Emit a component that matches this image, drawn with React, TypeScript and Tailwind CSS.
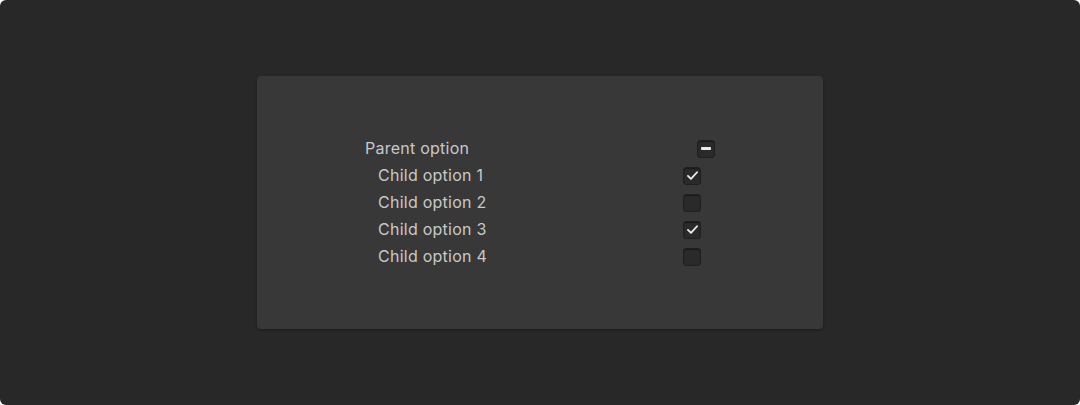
import { useState } from "react";

type Child = { label: string; checked: boolean };

const INITIAL: Child[] = [
  { label: "Child option 1", checked: true },
  { label: "Child option 2", checked: false },
  { label: "Child option 3", checked: true },
  { label: "Child option 4", checked: false },
];

export default function App() {
  const [items, setItems] = useState(INITIAL);

  const all = items.every((i) => i.checked);
  const some = items.some((i) => i.checked);

  function toggleParent() {
    setItems(items.map((i) => ({ ...i, checked: !all })));
  }

  function toggleChild(idx: number) {
    setItems(items.map((i, n) => (n === idx ? { ...i, checked: !i.checked } : i)));
  }

  return (
    <div
      className="flex h-[405px] w-[1080px] items-center justify-center rounded-md bg-[#282828]"
      style={{ fontFamily: "Inter, 'Noto Sans', sans-serif" }}
    >
      <div className="flex h-[253px] w-[566px] items-center justify-center rounded-[4px] bg-[#383838] shadow-[0_1px_3px_rgba(0,0,0,0.35)]">
        <div className="flex w-[350px] flex-col text-[16px] tracking-[0.25px] text-[#c8c8c8]">
          <label className="flex h-[27px] cursor-pointer items-center justify-between">
            <span className="pb-[2px]">Parent option</span>
            <Box state={all ? "checked" : some ? "mixed" : "off"} onClick={toggleParent} />
          </label>
          {items.map((item, idx) => (
            <label key={item.label} className="flex h-[27px] cursor-pointer items-center justify-between pl-[13px] pr-[14px]">
              <span className="pb-[2px]">{item.label}</span>
              <Box state={item.checked ? "checked" : "off"} onClick={() => toggleChild(idx)} />
            </label>
          ))}
        </div>
      </div>
    </div>
  );
}

function Box({ state, onClick }: { state: "checked" | "mixed" | "off"; onClick: () => void }) {
  return (
    <button
      type="button"
      onClick={onClick}
      className="flex h-[18px] w-[18px] items-center justify-center rounded-[3px] border border-[#1f1f1f] bg-[#2a2a2a] shadow-[inset_0_1px_1px_rgba(0,0,0,0.4)]"
    >
      {state === "checked" && (
        <svg width="13" height="13" viewBox="0 0 12 12" fill="none">
          <path d="M1.8 6.4 4.6 9.1 10.2 3" stroke="#ececec" strokeWidth="1.7" strokeLinecap="round" strokeLinejoin="round" />
        </svg>
      )}
      {state === "mixed" && <div className="h-[3px] w-[10px] rounded-[1px] bg-[#ececec]" />}
    </button>
  );
}
